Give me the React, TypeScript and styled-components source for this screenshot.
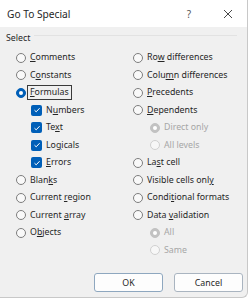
import React from 'react';
import styled, { createGlobalStyle } from 'styled-components';

const GlobalStyle = createGlobalStyle`
  html, body {
    margin: 0;
    padding: 0;
    background: #ffffff;
  }
  body {
    font-family: 'Noto Sans', 'Open Sans', sans-serif;
  }
`;

const Dialog = styled.div`
  width: 248px;
  height: 298px;
  display: flex;
  flex-direction: column;
  background: #f0f0f0;
  border-right: 1px solid #c8c8c8;
  border-bottom: 1px solid #c8c8c8;
  border-bottom-right-radius: 6px;
  box-sizing: border-box;
  overflow: hidden;
  color: #262626;
`;

const TitleBar = styled.div`
  height: 27px;
  flex: none;
  display: flex;
  align-items: center;
  background: #ffffff;
  padding-left: 7px;
`;

const Title = styled.span`
  font-size: 10.2px;
  flex: 1;
  padding-top: 1px;
`;

const TitleButton = styled.span<{ $w: number }>`
  width: ${(p) => p.$w}px;
  text-align: center;
  font-size: 10px;
  color: #555;
  display: flex;
  justify-content: center;
`;

const Body = styled.div`
  flex: 1;
  padding: 4px 6px 0 6px;
  display: flex;
  flex-direction: column;
`;

const GroupHeader = styled.div`
  height: 14px;
  display: flex;
  align-items: center;
  gap: 4px;
  font-size: 8.8px;
  &::after {
    content: '';
    flex: 1;
    height: 1px;
    margin-top: -6px;
    margin-right: 4px;
    background: #e2e2e2;
  }
`;

const Columns = styled.div`
  margin-top: 4px;
  display: grid;
  grid-template-columns: 117px 1fr;
  padding-left: 10px;
`;

const Column = styled.div`
  display: flex;
  flex-direction: column;
`;

const Row = styled.div<{ $indent?: number; $disabled?: boolean }>`
  height: 17.5px;
  display: flex;
  align-items: center;
  gap: 4px;
  padding-left: ${(p) => p.$indent ?? 0}px;
  font-size: 8.8px;
  color: ${(p) => (p.$disabled ? '#a6a6a6' : '#262626')};
`;

const Radio = styled.span<{ $checked?: boolean; $disabled?: boolean }>`
  width: 10px;
  height: 10px;
  border-radius: 50%;
  box-sizing: border-box;
  flex: none;
  background: ${(p) =>
    p.$checked ? (p.$disabled ? '#c2c2c2' : '#005fb8') : p.$disabled ? '#f7f7f7' : '#f9f9f9'};
  border: 1px solid
    ${(p) => (p.$checked ? (p.$disabled ? '#c2c2c2' : '#005fb8') : p.$disabled ? '#d0d0d0' : '#7d7d7d')};
  display: flex;
  align-items: center;
  justify-content: center;
  &::after {
    content: '';
    display: ${(p) => (p.$checked ? 'block' : 'none')};
    width: 4px;
    height: 4px;
    border-radius: 50%;
    background: #ffffff;
  }
`;

const Check = styled.span`
  width: 11px;
  height: 11px;
  border-radius: 2px;
  background: #005fb8;
  flex: none;
  display: flex;
  align-items: center;
  justify-content: center;
`;

const Label = styled.span<{ $focus?: boolean }>`
  white-space: nowrap;
  line-height: 11px;
  padding: 0 1px;
  margin-left: -1px;
  outline: ${(p) => (p.$focus ? '1px solid #3a3a3a' : 'none')};
  outline-offset: 1px;
  u {
    text-underline-offset: 1px;
  }
`;

const Footer = styled.div`
  display: flex;
  justify-content: flex-end;
  gap: 11px;
  padding: 0 4px 5px 0;
`;

const Button = styled.button<{ $primary?: boolean }>`
  width: 69px;
  height: 19px;
  box-sizing: border-box;
  border-radius: 3px;
  border: 1px solid ${(p) => (p.$primary ? '#8ea7bf' : '#a9b4c0')};
  background: #fdfdfd;
  font-family: 'Noto Sans', sans-serif;
  font-size: 8.8px;
  color: #262626;
  padding: 0;
`;

type Item = {
  label: React.ReactNode;
  kind?: 'radio' | 'check';
  checked?: boolean;
  disabled?: boolean;
  indent?: number;
  focus?: boolean;
};

const ul = (pre: string, key: string, post: string) => (
  <>
    {pre}
    <u>{key}</u>
    {post}
  </>
);

const left: Item[] = [
  { label: ul('', 'C', 'omments') },
  { label: ul('C', 'o', 'nstants') },
  { label: ul('', 'F', 'ormulas'), checked: true, focus: true },
  { label: ul('N', 'u', 'mbers'), kind: 'check', indent: 15 },
  { label: ul('Te', 'x', 't'), kind: 'check', indent: 15 },
  { label: ul('Lo', 'g', 'icals'), kind: 'check', indent: 15 },
  { label: ul('', 'E', 'rrors'), kind: 'check', indent: 15 },
  { label: ul('Blan', 'k', 's') },
  { label: ul('Current ', 'r', 'egion') },
  { label: ul('Current ', 'a', 'rray') },
  { label: ul('O', 'b', 'jects') },
];

const right: Item[] = [
  { label: ul('Ro', 'w', ' differences') },
  { label: ul('Colu', 'm', 'n differences') },
  { label: ul('', 'P', 'recedents') },
  { label: ul('', 'D', 'ependents') },
  { label: 'Direct only', disabled: true, checked: true, indent: 17 },
  { label: 'All levels', disabled: true, indent: 17 },
  { label: ul('La', 's', 't cell') },
  { label: ul('Visible cells onl', 'y', '') },
  { label: ul('Condi', 't', 'ional formats') },
  { label: ul('Data ', 'v', 'alidation') },
  { label: 'All', disabled: true, checked: true, indent: 17 },
  { label: 'Same', disabled: true, indent: 17 },
];

const CheckMark = () => (
  <svg width="8" height="8" viewBox="0 0 8 8">
    <path d="M1.5 4.2 L3.2 5.8 L6.6 2.2" fill="none" stroke="#fff" strokeWidth="1" />
  </svg>
);

const Option = ({ item }: { item: Item }) => (
  <Row $indent={item.indent} $disabled={item.disabled}>
    {item.kind === 'check' ? (
      <Check>
        <CheckMark />
      </Check>
    ) : (
      <Radio $checked={item.checked} $disabled={item.disabled} />
    )}
    <Label $focus={item.focus}>{item.label}</Label>
  </Row>
);

export default function App() {
  return (
    <>
      <GlobalStyle />
      <Dialog>
        <TitleBar>
          <Title>Go To Special</Title>
          <TitleButton $w={40}>?</TitleButton>
          <TitleButton $w={38}>
            <svg width="10" height="10" viewBox="0 0 10 10">
              <path d="M1 1 L9 9 M9 1 L1 9" stroke="#333" strokeWidth="0.9" />
            </svg>
          </TitleButton>
        </TitleBar>
        <Body>
          <GroupHeader>Select</GroupHeader>
          <Columns>
            <Column>
              {left.map((it, i) => (
                <Option key={i} item={it} />
              ))}
            </Column>
            <Column>
              {right.map((it, i) => (
                <Option key={i} item={it} />
              ))}
            </Column>
          </Columns>
        </Body>
        <Footer>
          <Button $primary>OK</Button>
          <Button>Cancel</Button>
        </Footer>
      </Dialog>
    </>
  );
}
